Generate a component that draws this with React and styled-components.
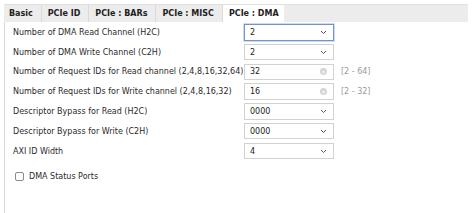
import styled, { createGlobalStyle } from "styled-components";

const GlobalStyle = createGlobalStyle`
  html, body {
    margin: 0;
    padding: 0;
    background: #ffffff;
  }
  body {
    font-family: "DejaVu Sans", sans-serif;
    font-size: 8px;
    color: #1e1e1e;
  }
`;

const tabs = ["Basic", "PCIe ID", "PCIe : BARs", "PCIe : MISC", "PCIe : DMA"];

const rows = [
  { label: "Number of DMA Read Channel (H2C)", value: "2", kind: "select", focused: true },
  { label: "Number of DMA Write Channel (C2H)", value: "2", kind: "select" },
  { label: "Number of Request IDs for Read channel (2,4,8,16,32,64)", value: "32", kind: "text", range: "[2 - 64]" },
  { label: "Number of Request IDs for Write channel (2,4,8,16,32)", value: "16", kind: "text", range: "[2 - 32]" },
  { label: "Descriptor Bypass for Read (H2C)", value: "0000", kind: "select" },
  { label: "Descriptor Bypass for Write (C2H)", value: "0000", kind: "select" },
  { label: "AXI ID Width", value: "4", kind: "select" },
];

const Page = styled.div`
  width: 474px;
  height: 213px;
  padding: 4px 6px 0 4px;
  box-sizing: border-box;
  display: flex;
  flex-direction: column;
  overflow: hidden;
`;

const TabBar = styled.div`
  display: flex;
  height: 18px;
  background: #ececec;
  border-top: 1px solid #e0e0e0;
  box-sizing: border-box;
`;

const Tab = styled.div`
  display: flex;
  align-items: center;
  padding: 0 ${(p) => (p.$active ? "4px" : "8px")} 0 ${(p) => (p.$first ? "5px" : "6px")};
  font-size: 8px;
  font-weight: bold;
  color: #222;
  background: ${(p) => (p.$active ? "#ffffff" : "transparent")};
  border-right: 1px solid ${(p) => (p.$active ? "transparent" : "#dadada")};
  white-space: nowrap;
`;

const Body = styled.div`
  flex: 1;
  border-left: 1px solid #d6d6d6;
  padding: 2px 0 0 8px;
  display: flex;
  flex-direction: column;
`;

const Grid = styled.div`
  display: grid;
  grid-template-columns: 231px 90px auto;
  row-gap: 3.3px;
  align-items: center;
`;

const Label = styled.div`
  white-space: nowrap;
  color: #2a2a2a;
`;

const Field = styled.div`
  height: 16.5px;
  box-sizing: border-box;
  border: 1px solid ${(p) => (p.$focused ? "#6f95cf" : "#d2d2d2")};
  box-shadow: ${(p) => (p.$focused ? "0 0 0 0.5px #9cb6e0" : "none")};
  display: flex;
  align-items: center;
  justify-content: space-between;
  padding: 0 6px 0 5px;
  background: #fff;
  color: #222;
`;

const Chevron = styled.svg`
  width: 7px;
  height: 5px;
`;

const ClearIcon = styled.span`
  width: 7px;
  height: 7px;
  border-radius: 50%;
  background: #d4d4d4;
  display: flex;
  align-items: center;
  justify-content: center;
  color: #fff;
  font-size: 6px;
  line-height: 1;
`;

const Range = styled.div`
  color: #9a9a9a;
  padding-left: 7px;
`;

const CheckRow = styled.label`
  display: flex;
  align-items: center;
  gap: 5px;
  margin-top: 13px;
  padding-left: 2px;
  color: #2a2a2a;
`;

const Box = styled.span`
  width: 9px;
  height: 9px;
  border: 1px solid #8a8a8a;
  border-radius: 2px;
  box-sizing: border-box;
  background: #fff;
`;

export default function App() {
  return (
    <>
      <GlobalStyle />
      <Page>
        <TabBar>
          {tabs.map((t, i) => (
            <Tab key={t} $first={i === 0} $active={i === tabs.length - 1}>
              {t}
            </Tab>
          ))}
        </TabBar>
        <Body>
          <Grid>
            {rows.map((r) => (
              <>
                <Label key={r.label + "l"}>{r.label}</Label>
                <Field key={r.label + "f"} $focused={r.focused}>
                  <span>{r.value}</span>
                  {r.kind === "select" ? (
                    <Chevron viewBox="0 0 7 5">
                      <path d="M1 1 L3.5 3.5 L6 1" fill="none" stroke="#555" strokeWidth="1" />
                    </Chevron>
                  ) : (
                    <ClearIcon>×</ClearIcon>
                  )}
                </Field>
                <Range key={r.label + "r"}>{r.range || ""}</Range>
              </>
            ))}
          </Grid>
          <CheckRow>
            <Box />
            DMA Status Ports
          </CheckRow>
        </Body>
      </Page>
    </>
  );
}
